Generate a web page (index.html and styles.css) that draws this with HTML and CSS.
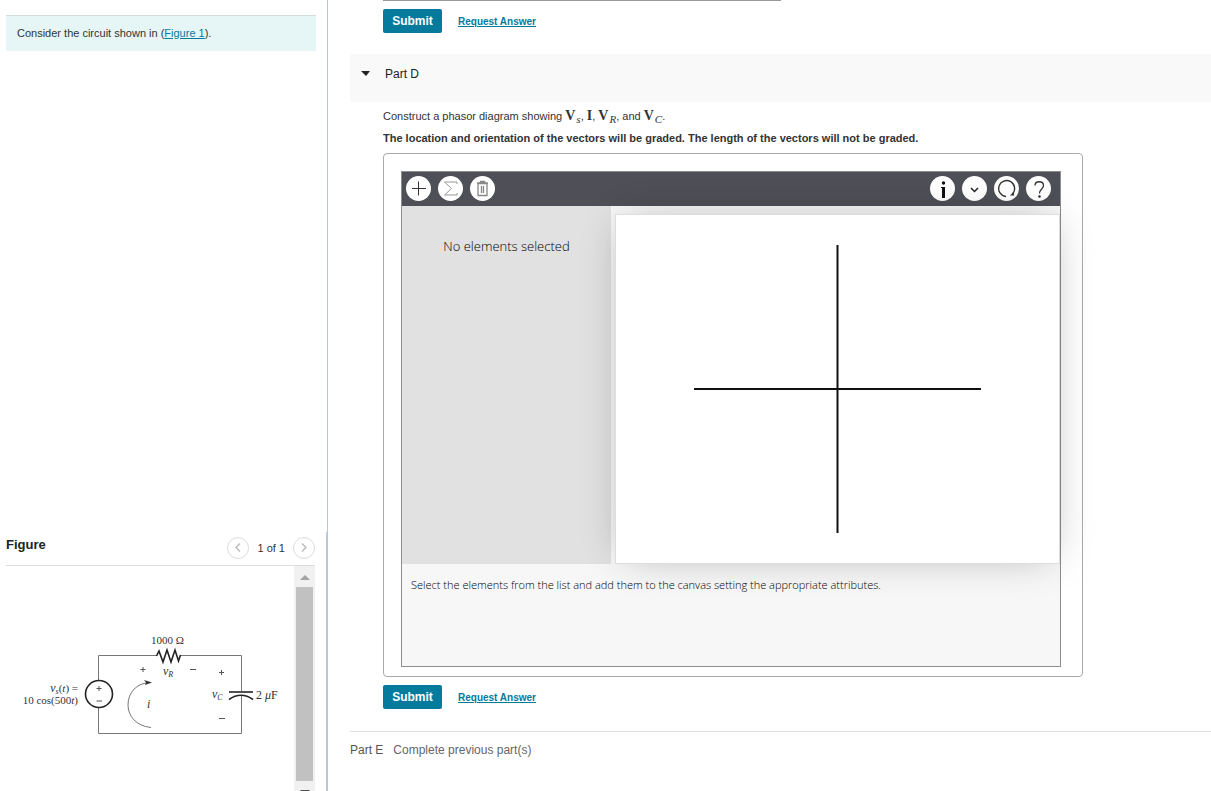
FILE: index.html
```html
<!DOCTYPE html>
<html lang="en">
<head>
    <meta charset="UTF-8">
    <meta name="viewport" content="width=device-width, initial-scale=1.0">
    <title>Phasor diagram - Part D</title>
    <link rel="stylesheet" href="styles.css">
</head>
<body>
    <aside class="sidebar">
        <div class="intro">
            <p class="intro-text">Consider the circuit shown in (<a href="#figure">Figure 1</a>).</p>
        </div>

        <section class="figure-panel" id="figure">
            <header class="figure-header">
                <h2 class="figure-title">Figure</h2>
                <div class="pager">
                    <button class="pager-btn" aria-label="Previous figure">
                        <svg width="10" height="12" viewBox="0 0 10 12"><path d="M7 1.500 3 5.500l4 4"/></svg>
                    </button>
                    <span class="pager-text">1 of 1</span>
                    <button class="pager-btn" aria-label="Next figure">
                        <svg width="10" height="12" viewBox="0 0 10 12"><path d="M3 1.500l4 4-4 4"/></svg>
                    </button>
                </div>
            </header>
            <div class="figure-body">
                <svg class="circuit" width="288" height="225" viewBox="6 566 288 225">
                    <!-- wires -->
                    <path class="wire" d="M98.500 680V655.500H157M180 655.500H241.500V691M241.500 696V733.500H98.500V708"/>
                    <path class="part" d="M156.500 656l2.500-5 4 11 4-12 4 12 4-12 3.500 11 2-6"/>
                    <circle class="part" cx="99" cy="694" r="13.500"/>
                    <path class="part" d="M229 692H253"/>
                    <path class="part" d="M229 699.500Q241 691 253 699.500"/>
                    <!-- loop current -->
                    <path class="wire" d="M151 727.500C136 726 128 716 128 705C128 692 137 683 150 682.500"/>
                    <path class="arrow" d="M152 682.500l-8-2.500 2 2.500-1 2.500z"/>
                    <!-- polarity marks -->
                    <path class="mark" d="M140.500 669.500h5M143 667v5M190 669.500h6M219 672.500h5M221.500 670v5M219 718.500h6M96.500 688.500h5M99 686v5M96.500 701h5.500"/>
                    <g class="label">
                        <text x="151" y="644">1000 Ω</text>
                        <text x="163" y="675" class="it symbol">v<tspan class="sub" dy="2">R</tspan></text>
                        <text x="212" y="698" class="it symbol">v<tspan class="sub" dy="2">C</tspan></text>
                        <text x="256" y="699" class="symbol">2 <tspan class="it">μ</tspan>F</text>
                        <text x="147" y="708" class="it symbol">i</text>
                        <text x="78" y="692" text-anchor="end"><tspan class="it symbol">v</tspan><tspan class="it sub" dy="2">s</tspan><tspan dy="-2">(</tspan><tspan class="it">t</tspan>) =</text>
                        <text x="78" y="704" text-anchor="end">10 cos(500<tspan class="it">t</tspan>)</text>
                    </g>
                </svg>
                <div class="scrollbar">
                    <span class="scroll-up"></span>
                    <span class="scroll-thumb"></span>
                    <span class="scroll-down"></span>
                </div>
            </div>
        </section>
    </aside>

    <main class="content">
        <div class="part-body">
            <div class="previous-answer"></div>
            <div class="actions">
                <button class="submit-btn">Submit</button>
                <a class="request-link" href="#">Request Answer</a>
            </div>
        </div>

        <header class="part-header">
            <span class="caret"></span>
            <h2 class="part-title">Part D</h2>
        </header>

        <div class="part-body">
            <p class="question">Construct a phasor diagram showing <span class="math"><b>V</b><sub>s</sub></span>, <span class="math"><b>I</b></span>, <span class="math"><b>V</b><sub>R</sub></span>, and <span class="math"><b>V</b><sub>C</sub></span>.</p>
            <p class="instructions">The location and orientation of the vectors will be graded. The length of the vectors will not be graded.</p>

            <div class="answer-box">
                <div class="editor">
                    <div class="toolbar">
                        <div class="tools">
                            <button class="tool-btn" aria-label="Add element">
                                <svg width="25" height="25" viewBox="0 0 25 25"><path d="M6 12.500h14M12.500 5.500v14" stroke="#333"/></svg>
                            </button>
                            <button class="tool-btn" aria-label="Add sum">
                                <svg width="25" height="25" viewBox="0 0 25 25"><path d="M19 8V6H6.500l7 6.500-7 6.500H19v-2" stroke="#999"/></svg>
                            </button>
                            <button class="tool-btn" aria-label="Delete">
                                <svg width="25" height="25" viewBox="0 0 25 25"><path d="M8 7.500h9V19.500H8zM11.500 10v7M13.500 10v7M7 7h11M10.500 6.500V5.500h4v1" stroke="#888" stroke-width="1.300"/></svg>
                            </button>
                        </div>
                        <div class="tools">
                            <button class="tool-btn" aria-label="Information">
                                <svg width="25" height="25" viewBox="0 0 25 25"><circle cx="13.500" cy="7" r="1.700" fill="#111"/><path d="M11 11.500h3" stroke="#111"/><path d="M13.500 11v11" stroke="#111" stroke-width="3"/></svg>
                            </button>
                            <button class="tool-btn" aria-label="More">
                                <svg width="25" height="25" viewBox="0 0 25 25"><path d="M9 12l3.500 3.500L16 12" stroke="#222" stroke-width="1.500"/></svg>
                            </button>
                            <button class="tool-btn" aria-label="Reset">
                                <svg width="25" height="25" viewBox="0 0 25 25"><path d="M12 20.500A8 8 0 1 1 18.500 18" stroke="#333" stroke-width="1.300"/><path d="M16 19.500h4v-4z" fill="#333"/></svg>
                            </button>
                            <button class="tool-btn" aria-label="Help">
                                <svg width="25" height="25" viewBox="0 0 25 25"><path d="M9 9.500C9 4.500 17.500 4.500 17.500 9.500C17.500 13 13.500 13 13.500 17.500" stroke="#333" stroke-width="1.300"/><circle cx="13.500" cy="20.500" r="1.200" fill="#222"/></svg>
                            </button>
                        </div>
                    </div>
                    <div class="workspace">
                        <div class="properties">No elements selected</div>
                        <div class="canvas">
                            <svg class="axes" width="287" height="288" viewBox="0 0 287 288">
                                <path d="M143.500 0v288M0 144h287"/>
                            </svg>
                        </div>
                    </div>
                    <p class="hint">Select the elements from the list and add them to the canvas setting the appropriate attributes.</p>
                </div>
            </div>

            <div class="actions">
                <button class="submit-btn">Submit</button>
                <a class="request-link" href="#">Request Answer</a>
            </div>
        </div>

        <footer class="next-part">
            <span class="next-title">Part E</span>
            <span>Complete previous part(s)</span>
        </footer>
    </main>
</body>
</html>
```
FILE: styles.css
```css
* {
    margin: 0;
    padding: 0;
    box-sizing: border-box;
}

body {
    display: flex;
    height: 100vh;
    overflow: hidden;
    background: #fff;
    color: #333;
    font-family: "Liberation Sans", Arial, sans-serif;
    font-size: 11px;
}

a {
    color: #047a9c;
}

button {
    border: none;
    font-family: inherit;
    cursor: pointer;
}

/* Left column */
.sidebar {
    display: flex;
    flex: 0 0 328px;
    flex-direction: column;
    justify-content: space-between;
    padding-top: 15px;
    border-right: 1px solid #bcc5ce;
}

.intro {
    margin: 0 11px 0 6px;
    padding: 10px 11px;
    border-top: 1px solid #d5dddd;
    background: #e6f6f6;
}

.intro-text {
    line-height: 15px;
}

.figure-panel {
    height: 259px;
    padding: 0 11px 0 6px;
    border-right: 1px solid #b8cce0;
}

.figure-header {
    display: flex;
    justify-content: space-between;
    height: 34px;
    border-bottom: 1px solid #ddd;
}

.figure-title {
    color: #222;
    font-size: 13px;
    font-weight: bold;
    line-height: 26px;
}

.pager {
    display: flex;
    align-items: center;
    gap: 8px;
    height: 32px;
}

.pager-btn {
    display: flex;
    align-items: center;
    justify-content: center;
    width: 22px;
    height: 22px;
    border: 1px solid #ddd;
    border-radius: 50%;
    background: #fff;
}

.pager-btn path {
    fill: none;
    stroke: #bbb;
    stroke-width: 1.5;
}

.figure-body {
    display: flex;
    justify-content: space-between;
    height: 225px;
    overflow: hidden;
}

.circuit {
    flex: none;
}

.wire,
.mark,
.part {
    fill: none;
    stroke: #777;
}

.mark {
    stroke: #555;
}

.part {
    stroke: #222;
    stroke-width: 1.6;
}

.arrow {
    fill: #333;
}

.label {
    fill: #333;
    font-family: "Liberation Serif", "Times New Roman", serif;
    font-size: 11px;
}

.symbol {
    font-size: 12px;
}

.it {
    font-style: italic;
}

.sub {
    font-size: 8px;
}

.scrollbar {
    display: flex;
    flex: 0 0 21px;
    flex-direction: column;
    align-items: center;
    background: #f1f1f1;
}

.scroll-up,
.scroll-down {
    flex: none;
    border: 5px solid transparent;
}

.scroll-up {
    margin: 4px 0 7px;
    border-bottom-color: #a3a3a3;
}

.scroll-thumb {
    flex: 0 0 194px;
    width: 17px;
    background: #c1c1c1;
}

.scroll-down {
    margin-top: 9px;
    border-top-color: #505050;
}

/* Right column */
.content {
    flex: 1;
    min-width: 0;
    padding-left: 22px;
}

.part-body {
    padding-left: 33px;
}

.previous-answer {
    width: 398px;
    height: 1px;
    border-bottom: 1px solid #999;
}

.actions {
    display: flex;
    align-items: center;
    gap: 16px;
    margin-top: 8px;
}

.submit-btn {
    width: 59px;
    height: 24px;
    border-radius: 2px;
    background: #047a9c;
    color: #fff;
    font-size: 12px;
    font-weight: bold;
}

.request-link {
    font-size: 10px;
    font-weight: bold;
}

.part-header {
    display: flex;
    gap: 15px;
    height: 48px;
    margin-top: 21px;
    padding-left: 11px;
    background: #f9f9f9;
}

.caret {
    height: 5px;
    margin-top: 17px;
    border: 5px solid transparent;
    border-top-color: #222;
    border-right-width: 4px;
    border-bottom: none;
}

.part-title {
    color: #222;
    font-size: 12px;
    font-weight: normal;
    line-height: 40px;
}

.question {
    height: 29px;
    line-height: 29px;
}

.instructions {
    padding-bottom: 8px;
    font-weight: bold;
    line-height: 14px;
}

.math {
    font-family: "Liberation Serif", "Times New Roman", serif;
    font-size: 14px;
    line-height: 1;
}

.math sub {
    padding-left: 1px;
    font-size: 11px;
    font-style: italic;
    line-height: 1;
    vertical-align: -3px;
}

.answer-box {
    max-width: 700px;
    padding: 17px 21px 9px 17px;
    border: 1px solid #aaa;
    border-radius: 4px;
}

.editor {
    border: 1px solid #8d8d8d;
    background: #f7f7f7;
}

.toolbar {
    display: flex;
    justify-content: space-between;
    padding: 4px 9px 5px 4px;
    background: #4e4f57;
}

.tools {
    display: flex;
    gap: 7px;
}

.tool-btn {
    width: 25px;
    height: 25px;
    border-radius: 50%;
    background: #fff;
}

.tool-btn svg {
    display: block;
    fill: none;
}

.workspace {
    display: flex;
    gap: 4px;
    height: 358px;
}

.properties {
    flex: 0 0 209px;
    padding-top: 30px;
    background: #e1e1e1;
    color: #000;
    font-family: "Open Sans", "Segoe UI", sans-serif;
    font-size: 13px;
    font-weight: 300;
    line-height: 20px;
    text-align: center;
}

.canvas {
    flex: 1;
    margin-top: 8px;
    padding-top: 30px;
    border: 1px solid #ddd;
    background: #fff;
    box-shadow: 0 0 40px -10px rgba(0, 0, 0, 0.3);
    text-align: center;
}

.axes path {
    stroke: #111;
    stroke-width: 2;
}

.hint {
    height: 102px;
    padding: 11px 9px;
    color: #000;
    font-family: "Open Sans", "Segoe UI", sans-serif;
    font-size: 11px;
    font-weight: 300;
    line-height: 20px;
}

.next-part {
    display: flex;
    gap: 10px;
    margin-top: 22px;
    padding-top: 10px;
    border-top: 1px solid #ddd;
    color: #666;
    font-size: 12px;
    line-height: 16px;
}

.next-title {
    color: #555;
}
```
